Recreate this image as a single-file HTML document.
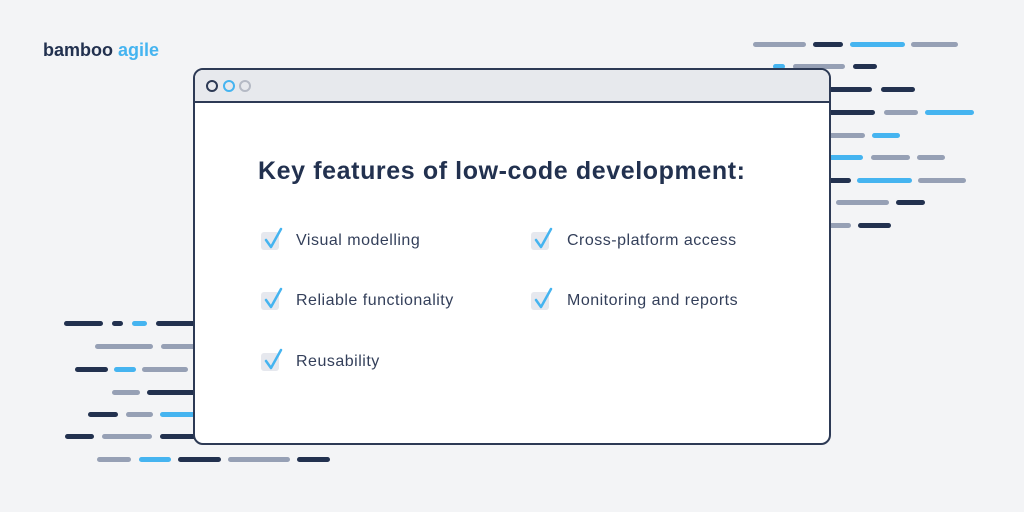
<!DOCTYPE html>
<html><head><style>
body{margin:0;width:1024px;height:512px;background:#f3f4f6;position:relative;overflow:hidden;font-family:"Liberation Sans",sans-serif}
.l{position:absolute;height:5px;border-radius:3px}
.d{background:#22314f}.g{background:#96a0b5}.b{background:#45b4f0}
.win{position:absolute;left:193px;top:68px;width:634px;height:373px;border:2px solid #2d3a55;border-radius:10px;background:#fff;overflow:hidden}
.bar{height:31px;background:#e7e9ed;border-bottom:2px solid #2d3a55;position:relative}
.c{position:absolute;top:10px;width:8px;height:8px;border-radius:50%;border:2px solid}
.it{position:absolute;font-size:16px;letter-spacing:0.5px;color:#333f5a;white-space:nowrap}
.cb{position:absolute;width:18px;height:18px;background:#e6e8ee;border-radius:3px}
.cb svg{position:absolute;left:2px;top:-6px}
</style></head><body>
<div style="position:absolute;left:43px;top:40px;font-size:18px;font-weight:bold;color:#22314f">bamboo <span style="color:#45b4f0">agile</span></div>

<div class="l g" style="left:753px;top:42px;width:53px"></div><div class="l d" style="left:813px;top:42px;width:30px"></div><div class="l b" style="left:850px;top:42px;width:55px"></div><div class="l g" style="left:911px;top:42px;width:47px"></div>
<div class="l b" style="left:773px;top:64px;width:12px"></div><div class="l g" style="left:793px;top:64px;width:52px"></div><div class="l d" style="left:853px;top:64px;width:24px"></div>
<div class="l d" style="left:800px;top:87px;width:72px"></div><div class="l d" style="left:881px;top:87px;width:34px"></div>
<div class="l d" style="left:800px;top:110px;width:75px"></div><div class="l g" style="left:884px;top:110px;width:34px"></div><div class="l b" style="left:925px;top:110px;width:49px"></div>
<div class="l g" style="left:800px;top:133px;width:65px"></div><div class="l b" style="left:872px;top:133px;width:28px"></div>
<div class="l b" style="left:800px;top:155px;width:63px"></div><div class="l g" style="left:871px;top:155px;width:39px"></div><div class="l g" style="left:917px;top:155px;width:28px"></div>
<div class="l d" style="left:800px;top:178px;width:51px"></div><div class="l b" style="left:857px;top:178px;width:55px"></div><div class="l g" style="left:918px;top:178px;width:48px"></div>
<div class="l g" style="left:836px;top:200px;width:53px"></div><div class="l d" style="left:896px;top:200px;width:29px"></div>
<div class="l g" style="left:800px;top:223px;width:51px"></div><div class="l d" style="left:858px;top:223px;width:33px"></div>

<div class="l d" style="left:64px;top:321px;width:39px"></div><div class="l d" style="left:112px;top:321px;width:11px"></div><div class="l b" style="left:132px;top:321px;width:15px"></div><div class="l d" style="left:156px;top:321px;width:60px"></div>
<div class="l g" style="left:95px;top:344px;width:58px"></div><div class="l g" style="left:161px;top:344px;width:50px"></div>
<div class="l d" style="left:75px;top:367px;width:33px"></div><div class="l b" style="left:114px;top:367px;width:22px"></div><div class="l g" style="left:142px;top:367px;width:46px"></div>
<div class="l g" style="left:112px;top:390px;width:28px"></div><div class="l d" style="left:147px;top:390px;width:60px"></div>
<div class="l d" style="left:88px;top:412px;width:30px"></div><div class="l g" style="left:126px;top:412px;width:27px"></div><div class="l b" style="left:160px;top:412px;width:50px"></div>
<div class="l d" style="left:65px;top:434px;width:29px"></div><div class="l g" style="left:102px;top:434px;width:50px"></div><div class="l d" style="left:160px;top:434px;width:50px"></div>
<div class="l g" style="left:97px;top:457px;width:34px"></div><div class="l b" style="left:139px;top:457px;width:32px"></div><div class="l d" style="left:178px;top:457px;width:43px"></div><div class="l g" style="left:228px;top:457px;width:62px"></div><div class="l d" style="left:297px;top:457px;width:33px"></div>

<div class="win"><div class="bar">
<div class="c" style="left:11px;border-color:#2d3a55"></div>
<div class="c" style="left:28px;border-color:#45b4f0"></div>
<div class="c" style="left:44px;border-color:#b5bac5"></div>
</div></div>

<div style="position:absolute;left:258px;top:157px;font-size:25px;letter-spacing:0.6px;font-weight:bold;color:#22314f;white-space:nowrap">Key features of low-code development:</div>

<div class="cb" style="left:261px;top:232px"><svg width="20" height="24" viewBox="0 0 20 24"><path d="M3 14 L8 21 L18 3" fill="none" stroke="#45b4f0" stroke-width="2.5" stroke-linecap="round" stroke-linejoin="round"/></svg></div>
<div class="it" style="left:296px;top:232px">Visual modelling</div>
<div class="cb" style="left:261px;top:292px"><svg width="20" height="24" viewBox="0 0 20 24"><path d="M3 14 L8 21 L18 3" fill="none" stroke="#45b4f0" stroke-width="2.5" stroke-linecap="round" stroke-linejoin="round"/></svg></div>
<div class="it" style="left:296px;top:292px">Reliable functionality</div>
<div class="cb" style="left:261px;top:353px"><svg width="20" height="24" viewBox="0 0 20 24"><path d="M3 14 L8 21 L18 3" fill="none" stroke="#45b4f0" stroke-width="2.5" stroke-linecap="round" stroke-linejoin="round"/></svg></div>
<div class="it" style="left:296px;top:353px">Reusability</div>
<div class="cb" style="left:531px;top:232px"><svg width="20" height="24" viewBox="0 0 20 24"><path d="M3 14 L8 21 L18 3" fill="none" stroke="#45b4f0" stroke-width="2.5" stroke-linecap="round" stroke-linejoin="round"/></svg></div>
<div class="it" style="left:567px;top:232px">Cross-platform access</div>
<div class="cb" style="left:531px;top:292px"><svg width="20" height="24" viewBox="0 0 20 24"><path d="M3 14 L8 21 L18 3" fill="none" stroke="#45b4f0" stroke-width="2.5" stroke-linecap="round" stroke-linejoin="round"/></svg></div>
<div class="it" style="left:567px;top:292px">Monitoring and reports</div>
</body></html>
